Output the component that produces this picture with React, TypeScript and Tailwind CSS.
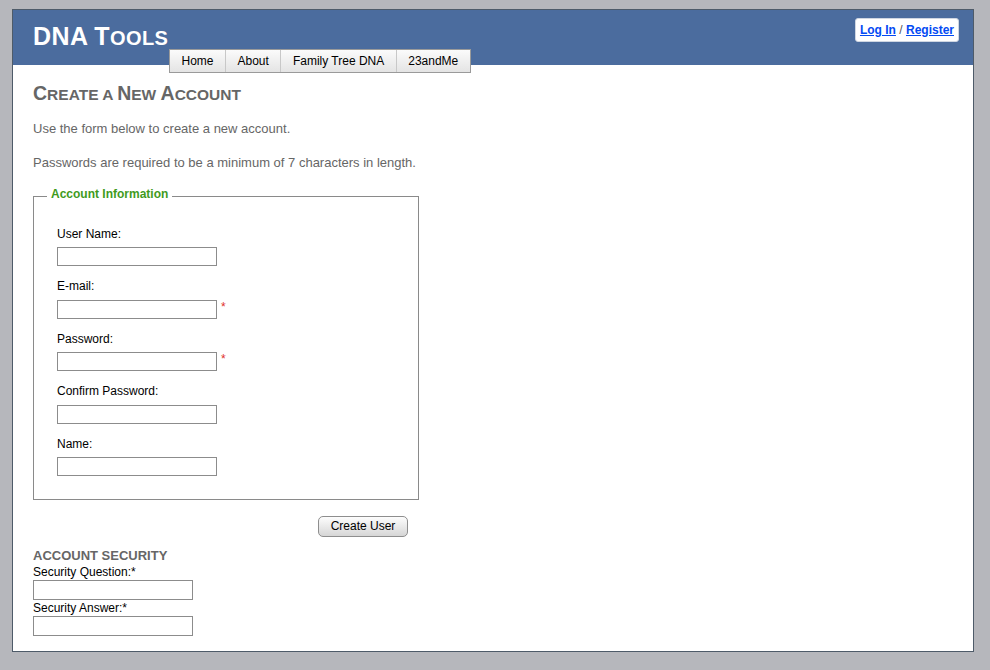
const font = { fontFamily: '"Liberation Sans", Arial, sans-serif' };

const menuItems = ['Home', 'About', 'Family Tree DNA', '23andMe'];

// small caps drawn by hand: capitals large, lowercase letters as smaller capitals
function SmallCaps({ text, big, small }: { text: string; big: string; small: string }) {
  const words = text.split(' ');
  return (
    <>
      {words.map((w, i) => {
        const allCaps = w === w.toUpperCase() && w.length > 1;
        const first = w[0];
        const rest = w.slice(1);
        const isCap = first === first.toUpperCase();
        return (
          <span key={i}>
            {i > 0 && <span className={small}> </span>}
            {allCaps ? (
              <span className={big}>{w}</span>
            ) : (
              <>
                <span className={isCap ? big : small}>{first.toUpperCase()}</span>
                {rest && <span className={small}>{rest.toUpperCase()}</span>}
              </>
            )}
          </span>
        );
      })}
    </>
  );
}

function Field({ label, required }: { label: string; required?: boolean }) {
  return (
    <div>
      <div className="text-[12px] leading-[15px] text-black">{label}</div>
      <div className="mt-[5.5px] flex items-start">
        <input
          type="text"
          className="h-[19px] w-[160px] border border-[#8c8c8c] bg-white text-[12px] outline-none"
        />
        {required && <span className="ml-[4px] mt-[1px] text-[12px] leading-[12px] text-[#e0302a]">*</span>}
      </div>
    </div>
  );
}

export default function App() {
  return (
    <div className="min-h-[670px] w-full bg-[#b6b7bc] pt-[9px]" style={font}>
      <div className="ml-[12px] w-[962px] border border-[#4e5b69] bg-white">
        {/* Header */}
        <div className="flex h-[55px] items-start bg-[#4b6c9e] pl-[20px]">
          <h1 className="h-[30px] w-[136px] whitespace-nowrap mt-[11px] font-bold leading-[30px] tracking-[0.4px] text-white">
            <SmallCaps text="DNA Tools" big="text-[25px]" small="text-[20px]" />
          </h1>
          <ul className="relative z-10 mt-[39px] flex border border-[#9a9a9a] bg-gradient-to-b from-[#fbfbfb] to-[#e4e4e4]">
            {menuItems.map((item, i) => (
              <li
                key={item}
                className={
                  'h-[22px] px-[11.5px] text-[12px] leading-[22px] text-black ' +
                  (i > 0 ? 'border-l border-[#c8c8c8]' : '')
                }
              >
                {item}
              </li>
            ))}
          </ul>
          <div className="ml-auto mr-[14px] mt-[8px] rounded-[3px] border border-[#cfd6e2] bg-white px-[4px] py-[3px] text-[12px] font-bold leading-[16px] text-[#555]">
            <a href="#" className="text-[#034af3] underline">Log In</a>
            <span className="font-normal"> / </span>
            <a href="#" className="text-[#034af3] underline">Register</a>
          </div>
        </div>

        {/* Main */}
        <div className="px-[20px] pb-[15px]">
          <h2 className="mt-[17px] h-[22px] whitespace-nowrap font-bold leading-[22px] text-[#666]">
            <SmallCaps text="Create a New Account" big="text-[19.5px]" small="text-[15.5px]" />
          </h2>
          <p className="mt-[17px] text-[13px] leading-[16px] text-[#666]">
            Use the form below to create a new account.
          </p>
          <p className="mt-[18px] text-[13px] leading-[16px] text-[#666]">
            Passwords are required to be a minimum of 7 characters in length.
          </p>

          <fieldset className="mt-[15.5px] w-[386px] border border-[#8a8a8a] px-[23px] pb-[23px] pt-[21px]">
            <legend className="-ml-[10px] px-[4px] pb-[4px] text-[12px] font-bold leading-[15px] text-[#3f9b1d]">
              Account Information
            </legend>
            <div className="flex flex-col gap-[13px]">
              <Field label="User Name:" />
              <Field label="E-mail:" required />
              <Field label="Password:" required />
              <Field label="Confirm Password:" />
              <Field label="Name:" />
            </div>
          </fieldset>

          <div className="mt-[15.5px] flex w-[386px] justify-end pr-[11px]">
            <button className="h-[21px] w-[90px] rounded-[5px] border border-[#8e8e8e] bg-gradient-to-b from-[#fdfdfd] to-[#d6d6d6] text-[12px] leading-[19px] text-black">
              Create User
            </button>
          </div>

          <h3 className="mt-[11.5px] text-[13px] font-bold uppercase leading-[16px] text-[#666]">
            Account Security
          </h3>
          <div className="text-[12px] leading-[16px] text-black">Security Question:*</div>
          <input
            type="text"
            className="block h-[20px] w-[160px] border border-[#8c8c8c] bg-white outline-none"
          />
          <div className="text-[12px] leading-[16px] text-black">Security Answer:*</div>
          <input
            type="text"
            className="block h-[20px] w-[160px] border border-[#8c8c8c] bg-white outline-none"
          />
        </div>
      </div>
    </div>
  );
}
